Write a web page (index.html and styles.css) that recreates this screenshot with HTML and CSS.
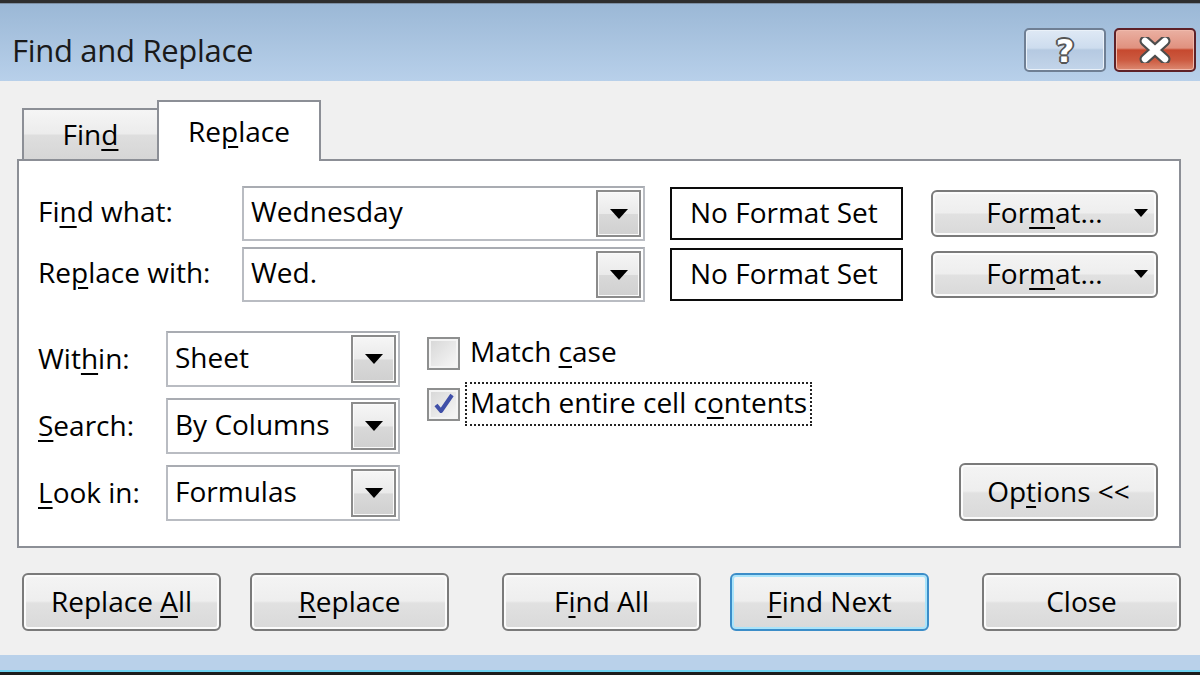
FILE: index.html
```html
<!DOCTYPE html>
<html>
<head>
<meta charset="utf-8">
<link rel="stylesheet" href="styles.css">
</head>
<body>
<div class="win">
  <div class="frame-top"></div>
  <div class="titlebar">
    <div class="title">Find and Replace</div>
    <div class="caption-btns">
      <div class="cbtn help"><span class="qmark">?</span></div>
      <div class="cbtn close">
        <svg width="40" height="26" viewBox="0 0 40 26">
          <path d="M10 4 L30 22 M30 4 L10 22" stroke="#4d4d4d" stroke-width="11" stroke-linecap="round"/>
          <path d="M10 4 L30 22 M30 4 L10 22" stroke="#ffffff" stroke-width="6.5" stroke-linecap="round"/>
        </svg>
      </div>
    </div>
  </div>
  <div class="client">
    <div class="tabs">
      <div class="tab"><span>Fin<u>d</u></span></div>
      <div class="tab active"><span>Re<u>p</u>lace</span></div>
    </div>
    <div class="panel">
      <div class="fr-rows">
        <div class="fr-row">
          <div class="lbl">Fi<u>n</u>d what:</div>
          <div class="combo wide r1">
            <div class="combo-text">Wednesday</div>
            <div class="drop"><svg width="20" height="10" viewBox="0 0 20 10"><path d="M1 0 H19 L10 10 Z" fill="#000"/></svg></div>
          </div>
          <div class="nfs">No Format Set</div>
          <div class="btn fmt"><span></span><span>For<u>m</u>at...</span><svg class="fmt-arrow" width="14" height="8" viewBox="0 0 14 8"><path d="M0 0 H14 L7 8 Z" fill="#000"/></svg></div>
        </div>
        <div class="fr-row">
          <div class="lbl">Re<u>p</u>lace with:</div>
          <div class="combo wide r2">
            <div class="combo-text">Wed.</div>
            <div class="drop"><svg width="20" height="10" viewBox="0 0 20 10"><path d="M1 0 H19 L10 10 Z" fill="#000"/></svg></div>
          </div>
          <div class="nfs">No Format Set</div>
          <div class="btn fmt"><span></span><span>For<u>m</u>at...</span><svg class="fmt-arrow" width="14" height="8" viewBox="0 0 14 8"><path d="M0 0 H14 L7 8 Z" fill="#000"/></svg></div>
        </div>
      </div>
      <div class="opts">
        <div class="opt-grid">
          <div class="lbl2">Wit<u>h</u>in:</div>
          <div class="combo small">
            <div class="combo-text">Sheet</div>
            <div class="drop"><svg width="20" height="10" viewBox="0 0 20 10"><path d="M1 0 H19 L10 10 Z" fill="#000"/></svg></div>
          </div>
          <div class="lbl2"><u>S</u>earch:</div>
          <div class="combo small">
            <div class="combo-text">By Columns</div>
            <div class="drop"><svg width="20" height="10" viewBox="0 0 20 10"><path d="M1 0 H19 L10 10 Z" fill="#000"/></svg></div>
          </div>
          <div class="lbl2"><u>L</u>ook in:</div>
          <div class="combo small">
            <div class="combo-text">Formulas</div>
            <div class="drop"><svg width="20" height="10" viewBox="0 0 20 10"><path d="M1 0 H19 L10 10 Z" fill="#000"/></svg></div>
          </div>
        </div>
        <div class="checks">
          <div class="check-row">
            <div class="cb"></div>
            <div class="cb-label"><span>Match <u>c</u>ase</span></div>
          </div>
          <div class="check-row">
            <div class="cb"><svg width="24" height="24" viewBox="0 0 24 24"><path d="M4 13 L9 19 L20 3" stroke="#3f4fa8" stroke-width="4" fill="none" stroke-linejoin="round"/></svg></div>
            <div class="cb-label focus"><span>Match entire cell c<u>o</u>ntents</span></div>
          </div>
        </div>
        <div class="btn options"><span>Op<u>t</u>ions &lt;&lt;</span></div>
      </div>
    </div>
    <div class="actions">
      <div class="btn act"><span>Replace <u>A</u>ll</span></div>
      <div class="btn act g1"><span><u>R</u>eplace</span></div>
      <div class="btn act g2"><span>F<u>i</u>nd All</span></div>
      <div class="btn act g1 default"><span><u>F</u>ind Next</span></div>
      <div class="btn act g2"><span>Close</span></div>
    </div>
  </div>
  <div class="frame-bottom"></div>
</div>
</body>
</html>
```
FILE: styles.css
```css
* { box-sizing: border-box; margin: 0; padding: 0; }
html, body { width: 1200px; height: 675px; overflow: hidden; }
body {
  font-family: "Open Sans", "Noto Sans", sans-serif;
  font-size: 28px;
  color: #000;
  background: #f0f0f0;
}
u {
  text-decoration: underline;
  text-decoration-thickness: 2px;
  text-underline-offset: 4px;
}
.win { display: flex; flex-direction: column; height: 675px; }

.frame-top {
  height: 4px;
  background: #2e2e2e;
  border-bottom: 1px solid #7d8fa3;
}
.titlebar {
  height: 77px;
  background: linear-gradient(#9bb8d6, #b8d0ea);
  display: flex;
  align-items: center;
  justify-content: space-between;
  padding: 14px 4px 0 12px;
}
.title {
  font-size: 31px;
  color: #1a1a1a;
  letter-spacing: -0.3px;
  padding-top: 1px;
}
.caption-btns { display: flex; gap: 8px; }
.cbtn {
  width: 82px;
  height: 44px;
  border-radius: 5px;
  display: flex;
  align-items: center;
  justify-content: center;
}
.help {
  border: 2px solid #6f7f94;
  background: linear-gradient(#dfe9f5 0%, #cddcee 45%, #b5c9e1 50%, #c3d5ea 100%);
  box-shadow: inset 0 0 0 1px #eaf1f9;
}
.qmark {
  font-family: "DejaVu Sans", sans-serif;
  font-weight: bold;
  font-size: 32px;
  line-height: 1;
  color: #fff;
  padding-top: 2px;
  text-shadow: -2px 0 #555, 2px 0 #555, 0 -2px #555, 0 2px #555,
    -1px -1px #555, 1px 1px #555, -1px 1px #555, 1px -1px #555;
}
.close {
  border: 2px solid #5e2128;
  background: linear-gradient(#eab0a2 0%, #e0917f 45%, #c6492f 50%, #cc5a40 75%, #dc8a72 100%);
  box-shadow: inset 0 0 0 1px #f0b9ab;
}

.client {
  flex: 1;
  display: flex;
  flex-direction: column;
  padding: 0 19px 0 17px;
}
.tabs {
  margin-top: 19px;
  height: 59px;
  display: flex;
  align-items: flex-end;
  position: relative;
  z-index: 2;
}
.tab {
  margin-left: 5px;
  width: 137px;
  height: 51px;
  border: 2px solid #8c8f96;
  border-bottom: none;
  background: linear-gradient(#f5f5f5 0%, #ececec 48%, #dedede 52%, #d6d6d6 100%);
  display: flex;
  align-items: center;
  justify-content: center;
  padding-bottom: 2px;
}
.tab.active {
  margin-left: -2px;
  width: 164px;
  height: 61px;
  margin-bottom: -2px;
  background: #fff;
  padding-bottom: 2px;
}

.panel {
  height: 389px;
  background: #fff;
  border: 2px solid #8c8f96;
  padding: 25px 21px 0 19px;
  display: flex;
  flex-direction: column;
}
.fr-rows { display: flex; flex-direction: column; gap: 6px; }
.fr-row { display: flex; align-items: center; height: 55px; }
.lbl { width: 204px; padding-bottom: 5px; }
.lbl2 { padding-bottom: 3px; }
.combo {
  display: flex;
  border: 2px solid #b9bcc2;
  border-top-color: #a9acb2;
  background: #fff;
  padding: 2px;
}
.combo.wide { width: 403px; height: 55px; }
.combo-text {
  flex: 1;
  display: flex;
  align-items: center;
  padding-left: 5px;
  padding-bottom: 5px;
}
.drop {
  width: 45px;
  border: 2px solid #8b8b8b;
  background: linear-gradient(#f6f6f6 0%, #eaeaea 50%, #d9d9d9 52%, #d0d0d0 100%);
  box-shadow: inset 0 0 0 1px #fafafa;
  display: flex;
  align-items: center;
  justify-content: center;
}
.nfs {
  margin-left: 25px;
  width: 233px;
  height: 53px;
  border: 2px solid #0c0c0c;
  display: flex;
  align-items: center;
  padding-left: 18px;
  padding-bottom: 4px;
}

.btn {
  border: 2px solid #7a7a7a;
  border-radius: 6px;
  background: linear-gradient(#f4f4f4 0%, #eeeeee 48%, #e1e1e1 52%, #d9d9d9 100%);
  box-shadow: inset 0 0 0 2px #fbfbfb;
  display: flex;
  align-items: center;
  justify-content: center;
  padding-bottom: 3px;
}
.btn.fmt {
  margin-left: 28px;
  width: 227px;
  height: 47px;
  display: grid;
  grid-template-columns: 1fr auto 1fr;
  align-items: center;
}
.fmt-arrow { justify-self: end; margin-right: 8px; margin-top: 2px; }

.opts {
  margin-top: 29px;
  display: flex;
  align-items: flex-start;
}
.opt-grid {
  display: grid;
  grid-template-columns: 128px 234px;
  grid-auto-rows: 56px;
  row-gap: 11px;
  align-items: center;
}
.combo.small { height: 56px; }
.checks {
  margin-left: 27px;
  display: flex;
  flex-direction: column;
  gap: 7px;
}
.check-row {
  display: flex;
  align-items: center;
  height: 44px;
}
.cb {
  width: 33px;
  height: 33px;
  border: 2px solid #8e8f8f;
  background: linear-gradient(135deg, #d6d6d6, #f8f8f8);
  box-shadow: inset 0 0 0 2px #f4f4f4;
  display: flex;
  align-items: center;
  justify-content: center;
}
.cb-label {
  margin-left: 10px;
  height: 44px;
  display: flex;
  align-items: center;
  padding: 0 3px 4px 0;
}
.cb-label.focus {
  margin-left: 5px;
  padding-left: 3px;
  border: 2px dotted #222;
}
.btn.options {
  margin-left: auto;
  margin-top: 132px;
  width: 199px;
  height: 58px;
}

.actions {
  margin-top: 25px;
  display: flex;
  padding-left: 5px;
}
.btn.act { width: 199px; height: 58px; }
.g1 { margin-left: 29px; }
.g2 { margin-left: 53px; }
.btn.default {
  border-color: #3c8dc8;
  box-shadow: inset 0 0 0 2px #a9e4fb;
}

.frame-bottom {
  height: 20px;
  background: linear-gradient(#b9d1ea 0%, #b9d1ea 75%, #6fd2f0 75%, #6fd2f0 85%, #1d1d1d 85%);
}
```
